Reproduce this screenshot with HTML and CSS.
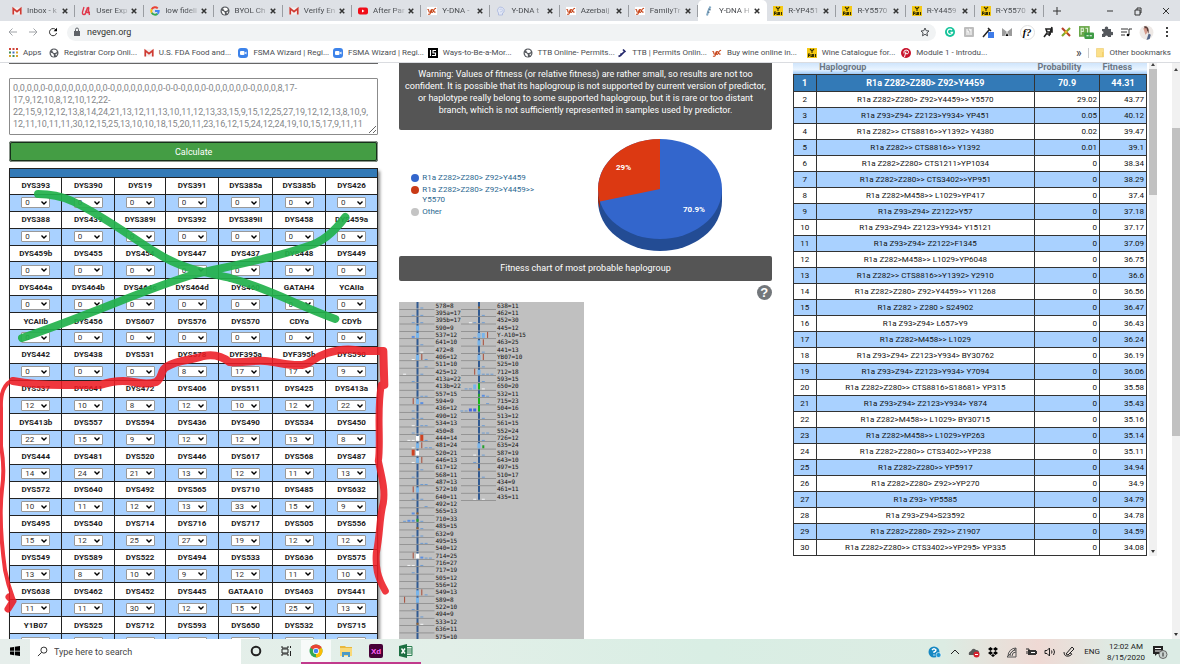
FILE: index.html
```html
<!DOCTYPE html>
<html lang="en">
<head>
<meta charset="utf-8">
<title>Y-DNA Haplogroup Predictor</title>
<link rel="stylesheet" href="styles.css">
</head>
<body>
<svg class="sprite" aria-hidden="true">
  <symbol id="gmail" viewBox="0 0 20 16"><path fill="#f4eeee" d="M1 1h18v14H1z"/><path fill="none" stroke="#cf3a32" stroke-width="3.4" d="M2.500 15V3l7.500 6.500L17.500 3v12"/></symbol>
  <symbol id="ux" viewBox="0 0 20 20"><path fill="none" stroke="#e0364a" stroke-width="2.600" d="M6 2L3 12q-1 5 3 5 3 0 4-5l3-9-2 10M9 12q5-9 6-9t0 6l2 9M11 13h7"/></symbol>
  <symbol id="google" viewBox="0 0 20 20"><g fill="none" stroke-width="3.800"><path stroke="#ea4335" d="M3.500 6.500A7.500 7.500 0 0 1 15.500 4.800"/><path stroke="#fbbc05" d="M3.500 6.500a7.500 7.500 0 0 0 0 7"/><path stroke="#34a853" d="M3.500 13.500a7.500 7.500 0 0 0 11.500 2"/><path stroke="#4285f4" d="M15 15.500q2.500-2 2.500-5.500H10"/></g></symbol>
  <symbol id="globe" viewBox="0 0 20 20"><circle cx="10" cy="10" r="9" fill="#55585d"/><path fill="#fff" d="M9 3l5 1 2 4-4 2-3 0-1-3-3-1zM3 9l5 2 2 3-1 4-4-3zM13 12l4-1-3 5z"/></symbol>
  <symbol id="youtube" viewBox="0 0 20 16"><rect y="1" width="20" height="14" rx="4" fill="#f00d18"/><path fill="#fff" d="M8 5l5 3-5 3z"/></symbol>
  <symbol id="yo" viewBox="0 0 22 18"><path fill="#fff" d="M0 0h22v18H0z"/><path fill="none" stroke="#c8481e" stroke-width="2.400" d="M1 6q3-1 3 3t3 2l3-6M9 11l-3 5H2M20 3q-4 1-5 4t-3 5q-3 0-2-4t4 0q2 5 5 3"/></symbol>
  <symbol id="head" viewBox="0 0 20 20"><path fill="#e2e7f5" stroke="#a5b4dc" stroke-width="1.500" d="M5 18v-4Q1 10 4 5t9-2q5 3 3 9l-3 2v4z"/><path fill="none" stroke="#a5b4dc" d="M7 7q5-3 6 1t-5 4"/></symbol>
  <symbol id="helix" viewBox="0 0 20 20"><path fill="none" stroke="#82a9c4" stroke-width="4" d="M13 1q-5 8-7 18"/><path stroke="#46617c" stroke-width="1.500" d="M9 6l5 2M7 12l4 1"/></symbol>
  <symbol id="yfull" viewBox="0 0 20 20"><path fill="#f5c914" d="M0 0h20v20H0z"/><path fill="none" stroke="#353005" stroke-width="2.200" d="M6 2l4 4 4-4M10 6v4M3 18v-6h3M3 15h3M8 12v5h3v-5M13 12v6M17 12v6"/></symbol>
  <symbol id="zoomcam" viewBox="0 0 20 20"><rect width="20" height="20" rx="6" fill="#3d83ea"/><rect x="4" y="6" width="9" height="8" rx="2" fill="#fff"/><path fill="#fff" d="M13 10l4-3v6z"/></symbol>
  <symbol id="isq" viewBox="0 0 20 20"><path d="M0 0h20v20H0z"/><path fill="none" stroke="#fff" stroke-width="2.200" d="M5 4v12M16 5h-6v5h5v5H8"/></symbol>
  <symbol id="ttb" viewBox="0 0 20 20"><path fill="none" stroke="#24276b" stroke-width="3.500" d="M3 17l4-2 9-9M12 3l5 5M7 11l3 3"/></symbol>
  <symbol id="pin" viewBox="0 0 20 20"><circle cx="10" cy="10" r="10" fill="#c8132c"/><path fill="none" stroke="#fff" stroke-width="2" d="M6 11q-2-6 4-7 6 0 5 5-2 5-5 2M10 7L7 18"/></symbol>
  <symbol id="folder" viewBox="0 0 16 20"><path fill="#fce08a" stroke="#e6c25a" d="M1 1h14v17H1z"/><path fill="#f4d26b" d="M12 8h3v10h-3z"/></symbol>
</svg>

<header class="chrome">
  <div class="tabbar">
    <nav class="tabs" id="tabs" aria-label="Tabs"></nav>
    <div class="tabbar-end">
      <button class="icon-btn" aria-label="New tab"><svg viewBox="0 0 10 10"><path class="ln" d="M5 1v8M1 5h8"/></svg></button>
      <div class="win">
        <button class="icon-btn" aria-label="Minimize"><svg viewBox="0 0 10 10"><path class="ln" d="M2 5h6"/></svg></button>
        <button class="icon-btn" aria-label="Restore"><svg viewBox="0 0 10 10"><path class="ln" d="M2 4h5v5H2zM4 4V2h4v5H7"/></svg></button>
        <button class="icon-btn" aria-label="Close"><svg viewBox="0 0 10 10"><path class="ln" d="M2 2l6 6M8 2L2 8"/></svg></button>
      </div>
    </div>
  </div>
  <div class="toolbar">
    <button class="icon-btn dim" aria-label="Back"><svg viewBox="0 0 10 10"><path class="ln" d="M9 5H1M4.500 1.500L1 5l3.500 3.500"/></svg></button>
    <button class="icon-btn dim" aria-label="Forward"><svg viewBox="0 0 10 10"><path class="ln" d="M1 5h8M5.500 1.500L9 5 5.500 8.500"/></svg></button>
    <button class="icon-btn" aria-label="Reload"><svg viewBox="0 0 10 10"><path class="ln thick" d="M8 3a3.600 3.600 0 1 0 .6 3"/><path d="M9 .8v3.400H5.600z"/></svg></button>
    <div class="omnibox">
      <svg class="lock" viewBox="0 0 8 10"><path fill="#5f6368" d="M1 4h6v5H1z"/><path fill="none" stroke="#5f6368" d="M2.500 4V2.500a1.500 1.500 0 0 1 3 0V4"/></svg>
      <input class="url" aria-label="Address" value="nevgen.org">
      <svg class="star" viewBox="0 0 10 10"><path fill="none" stroke="#4a4d51" d="M5 1l1.200 2.700 2.800.3-2.100 1.900.6 2.900L5 7.300 2.500 8.800l.6-2.900L1 4l2.800-.3z"/></svg>
    </div>
    <div class="exts">
      <svg viewBox="0 0 12 12"><circle cx="6" cy="6" r="5" fill="#15c39a"/><path fill="none" stroke="#fff" stroke-width="1.200" d="M8 4a2.600 2.600 0 1 0 .6 2.300H6.500"/></svg>
      <svg viewBox="0 0 12 12"><rect x="1" y="1" width="10" height="10" rx="1" fill="#bdbdbd"/><path fill="none" stroke="#f4f4f4" stroke-width="1.300" d="M4 9V3M4 6q2-2 2 3M8 3v6M6 3l2 2"/></svg>
      <svg viewBox="0 0 12 12"><path stroke="#222" stroke-width="1.500" d="M1 11l6-7M6 2l3 3"/><path fill="#3e7be8" d="M6 6h6v6H6z"/></svg>
      <svg viewBox="0 0 12 12"><path fill="#9b9b9b" d="M1 2l5 4 5-4v8H1z"/><path stroke="#e0e0e0" d="M4 10l2-4 2 4"/></svg>
      <svg viewBox="0 0 16 16"><circle cx="8" cy="8" r="7.500" fill="#fff" stroke="#ddd"/><text x="3" y="12" class="fq">f?</text></svg>
      <svg viewBox="0 0 12 12"><path fill="none" stroke="#222" stroke-width="1.600" d="M2 11l3-4M4 3h6v3H5zM5 8h4M10 1l-3 9"/></svg>
      <svg viewBox="0 0 12 12"><path stroke="#b8402a" stroke-width="2.200" d="M2 2l8 8"/><path stroke="#80a92b" stroke-width="2.200" d="M10 2l-8 8"/><circle cx="6" cy="6" r="1.500" fill="#e8b125"/></svg>
      <svg viewBox="0 0 14 14"><path fill="#6aa84a" d="M0 1h10v10H0z"/><path fill="none" stroke="#e2f1dc" d="M2 9V3h2v3H2M6 3h2v5H6"/><rect x="5" y="7" width="9" height="6" rx="1" fill="#3e9b45"/><path stroke="#fff" d="M7 10h2M10 10h2"/></svg>
      <svg viewBox="0 0 12 12"><path fill="#55585d" d="M1 3h3a1.700 1.700 0 1 1 3 0h3v3a1.700 1.700 0 1 1 0 3v2H7a1.500 1.500 0 1 0-3 0H1V8a1.500 1.500 0 1 0 0-3z"/></svg>
      <svg viewBox="0 0 12 12"><path class="ln" d="M1 3h7M1 6h6M1 9h4M9 9V3h3"/><circle cx="8" cy="9" r="1.300"/></svg>
      <svg viewBox="0 0 14 14"><circle cx="7" cy="7" r="6.500" fill="#eee9e6"/><path fill="#5a3a34" d="M5 1q5 0 4 7-1-3-4-4z"/><path fill="#d49a8c" d="M4 3h3l1 4-2 2z"/><path fill="#54678a" d="M9 8l2 1-1 4-3 1z"/></svg>
      <svg viewBox="0 0 12 12"><circle cx="6" cy="2" r="1"/><circle cx="6" cy="6" r="1"/><circle cx="6" cy="10" r="1"/></svg>
    </div>
  </div>
  <nav class="bookmarks" aria-label="Bookmarks">
    <a class="apps" href="#"><svg viewBox="0 0 9 9"><path fill="#d04338" d="M0 0h2v2H0zM3.500 0h2v2h-2zM7 0h2v2H7z"/><path fill="#3f8d52" d="M0 3.500h2v2H0zM3.500 7h2v2h-2z"/><path fill="#426fc5" d="M3.500 3.500h2v2h-2z"/><path fill="#d8a52c" d="M7 3.500h2v2H7zM0 7h2v2H0zM7 7h2v2H7z"/></svg>Apps</a>
    <div class="bm-list" id="bookmarks"></div>
    <div class="bm-end"><button class="more" aria-label="More bookmarks">»</button><a href="#"><svg><use href="#folder"/></svg>Other bookmarks</a></div>
  </nav>
</header>

<main class="page">
  <section class="entry">
    <div class="strip"></div>
    <textarea class="haplotype" aria-label="Haplotype" rows="4">0,0,0,0,0-0,0,0,0,0,0,0,0,0-0,0,0,0,0,0,0,0-0-0-0,0,0,0-0,0,0,0,0,0-0,0,0,0,8,17-
17,9,12,10,8,12,10,12,22-
22,15,9,12,12,13,8,14,24,21,13,12,11,13,10,11,12,13,33,15,9,15,12,25,27,19,12,12,13,8,10,9,
12,11,10,11,11,30,12,15,25,13,10,10,18,15,20,11,23,16,12,15,24,12,24,19,10,15,17,9,11,11</textarea>
    <button class="calculate">Calculate</button>
    <table class="markers">
      <colgroup><col class="c-mid"><col class="c-mid"><col class="c-slim"><col class="c-mid"><col class="c-wide"><col class="c-mid"><col class="c-mid"></colgroup>
      <thead><tr><th colspan="7"></th></tr></thead>
      <tbody id="markers"></tbody>
    </table>
    <svg class="ink" viewBox="0 0 390 576" preserveAspectRatio="none" aria-hidden="true">
      <g class="pen-green">
        <path d="M38 131Q56 131 72 138C105 154 125 170 155 189C180 205 202 209 230 215C270 226 294 241 335 256"/>
        <path d="M345 154Q327 178 308 183C275 195 225 204 195 211C145 226 90 252 22 275"/>
      </g>
      <g class="pen-red">
        <path class="fat" d="M13 318Q35 322 62 322T100 322Q118 316 133 319T156 319C163 315 160 307 166 304C179 296 190 298 203 293Q218 290 229 299C246 300 252 297 265 298S288 303 302 302C311 301 312 295 327 290Q345 284 361 288L383 288L384 322"/>
        <path d="M381 322C376 350 381 378 378 398C382 416 385 427 383 440C379 455 380 470 376 490C375 504 377 514 385 528"/>
        <path class="thin" d="M11 318Q0 324 1 345V386"/>
        <path class="thin" d="M1 383Q5 405 2 426C-1 453 2 485 5 507Q8 522 13 535"/>
        <path d="M8 546L13 538 9 534"/>
      </g>
    </svg>
  </section>

  <section class="result">
    <p class="notice">Warning: Values of fitness (or relative fitness) are rather small, so results are not too<br>confident. It is possible that its haplogroup is not supported by current version of predictor,<br>or haplotype really belong to some supported haplogroup, but it is rare or too distant<br>branch, which is not sufficiently represented in samples used by predictor.</p>
    <div class="share">
      <ul class="legend">
        <li class="first">R1a Z282&gt;Z280&gt; Z92&gt;Y4459</li>
        <li class="second">R1a Z282&gt;Z280&gt; Z92&gt;Y4459&gt;&gt;<br>Y5570</li>
        <li class="other">Other</li>
      </ul>
      <svg class="pie" viewBox="0 0 124 112" role="img" aria-label="Probability pie">
        <path fill="#234c94" d="M0 50v12a62 50 0 0 0 124 0V50z"/>
        <path fill="#a5290c" d="M0 50v12l2 8V60z"/>
        <ellipse cx="62" cy="50" rx="62" ry="50" fill="#3366cc"/>
        <path fill="#dc3912" d="M62 50V0A62 50 0 0 0 2 62.500z"/>
        <text x="18" y="31">29%</text><text x="85" y="73">70.9%</text>
      </svg>
    </div>
    <h2 class="chart-title">Fitness chart of most probable haplogroup</h2>
    <button class="help" aria-label="Help">?</button>
    <svg class="fitness" id="fitness" viewBox="0 0 185 340" role="img" aria-label="Fitness chart"></svg>
  </section>

  <section class="ranking">
    <table class="groups">
      <colgroup><col class="g-rank"><col><col class="g-prob"><col class="g-fit"></colgroup>
      <thead><tr><th></th><th>Haplogroup</th><th>Probability</th><th>Fitness</th></tr></thead>
      <tbody id="groups"></tbody>
    </table>
    <div class="bar inner"><i class="up"></i><span class="thumb"></span><i class="down"></i></div>
  </section>
  <div class="bar outer"><i class="up"></i><span class="thumb"></span><i class="down"></i></div>
</main>

<footer class="taskbar">
  <button class="task" aria-label="Start"><svg viewBox="0 0 12 12"><path d="M1 2.500l4-.6v3.800H1zM5.800 1.800L11 1v4.700H5.800zM1 6.400h4v3.800l-4-.6zM5.800 6.400H11v4.700l-5.200-.8z"/></svg></button>
  <label class="search"><svg viewBox="0 0 12 12"><path class="ln" d="M1 11l4-4"/><circle class="ln" cx="7.500" cy="4.500" r="3.300"/></svg><input placeholder="Type here to search" aria-label="Search"></label>
  <button class="task" aria-label="Cortana"><svg viewBox="0 0 12 12"><circle class="ln thick" cx="6" cy="6" r="4.300"/></svg></button>
  <button class="task" aria-label="Task view"><svg viewBox="0 0 12 12"><path class="ln" d="M2 1v2h6V1M2 11V9h6v2M2 4h6v4H2zM10.500 1v2M10.500 6v5"/></svg></button>
  <button class="task open active" aria-label="Chrome"><svg viewBox="0 0 14 14"><circle cx="7" cy="7" r="6.500" fill="#34a853"/><path fill="#ea4335" d="M7 7L1.400 3.700A6.500 6.500 0 0 1 12.600 3.700z"/><path fill="#fbbc05" d="M7 7l5.600-3.300A6.500 6.500 0 0 1 7 13.500z"/><circle cx="7" cy="7" r="3" fill="#fff"/><circle cx="7" cy="7" r="2.300" fill="#4285f4"/></svg></button>
  <button class="task open" aria-label="Explorer"><svg viewBox="0 0 14 14"><path fill="#e9b83d" d="M1 2h5l1 1h6v3H1z"/><path fill="#f9d978" d="M1 4h12v8H1z"/><path fill="#4b9ac7" d="M3 8h8v5H9v-2H5v2H3z"/></svg></button>
  <button class="task open" aria-label="Adobe XD"><svg viewBox="0 0 14 14"><rect width="14" height="14" rx="2" fill="#470137"/><text x="2" y="10" class="xd">Xd</text></svg></button>
  <button class="task open" aria-label="Excel"><svg viewBox="0 0 14 14"><path fill="#eef5ef" stroke="#2d8152" d="M7 2.500h6v9H7z"/><path stroke="#2d8152" d="M8 5h5M8 7h5M8 9h5"/><path fill="#1d6f42" d="M0 2l8-2v14l-8-2z"/><path stroke="#fff" stroke-width="1.400" d="M2.500 4.500l3.500 5M6 4.500l-3.500 5"/></svg></button>
  <div class="tray">
    <svg viewBox="0 0 14 12"><circle cx="6" cy="6" r="5.500" fill="#1688c2"/><path fill="none" stroke="#fff" stroke-width="1.400" d="M4 4q2-2.500 4 0 0 1.500-2 2v1M6 8.500v1"/><circle cx="10.500" cy="9" r="2.500" fill="#1c95d1" stroke="#fff" stroke-width=".6"/></svg>
    <svg viewBox="0 0 12 12"><path class="ln" d="M2 8l4-4 4 4"/></svg>
    <svg viewBox="0 0 12 12"><path fill="#595959" d="M1 9q-1-3 2-4 2-4 5-1 4 0 3 5z"/><circle cx="8.500" cy="8.500" r="3" fill="#d7212e"/><path stroke="#fff" d="M7 8.500h3"/></svg>
    <svg viewBox="0 0 12 12"><path d="M3.500 1L6 3 3.500 5 1 3zM8.500 1L11 3 8.500 5 6 3zM3.500 5L6 7 3.500 9 1 7zM8.500 5L11 7 8.500 9 6 7zM6 8l2 1.500L6 11 4 9.500z"/></svg>
    <svg viewBox="0 0 12 12"><path fill="none" stroke="#555" d="M2 10a8 8 0 0 1 8-8M4 10a6 6 0 0 1 6-6M6 10a4 4 0 0 1 4-4M1 11l9-9v9z"/></svg>
    <svg viewBox="0 0 12 12"><path fill="#333" d="M3 4h8v5H3zM11 5h1v3h-1z"/><path class="ln" d="M1 3h3v2M2 5v3"/><path stroke="#fff" d="M6 6.500h4"/></svg>
    <svg viewBox="0 0 12 12"><path class="ln" d="M1 4.500h2l2.500-2.500v8L3 7.500H1zM7.500 4.500q1 1.500 0 3M9.500 3q2 3 0 6"/></svg>
    <svg viewBox="0 0 12 12"><path class="ln" d="M3 8l6-7 2 2-6 6zM1 6q0 5 5 4 5-2 1-3"/></svg>
    <span class="lang">ENG</span>
    <time class="clock">12:02 AM<br>8/15/2020</time>
    <svg viewBox="0 0 16 14"><path fill="#222" d="M1 1h10v8H5l-2 2V9H1z"/><path stroke="#fff" d="M3 3.500h6M3 6h6"/><circle cx="11" cy="9.500" r="4" fill="#c9d2cf" stroke="#666"/><path stroke="#222" d="M11 7.500v4"/></svg>
  </div>
</footer>
<script src="app.js"></script>
</body>
</html>
```

FILE: styles.css
```css
* { box-sizing: border-box; }
body {
  margin: 0; height: 100vh; display: flex; flex-direction: column; overflow: hidden;
  background: #fff; color: #222; font-family: Roboto, "Liberation Sans", sans-serif; font-size: 8px;
}
button { border: 0; padding: 0; background: none; font: inherit; color: inherit; }
a { color: inherit; text-decoration: none; }
.sprite { position: absolute; width: 0; height: 0; }
.ln { fill: none; stroke: currentColor; stroke-width: 1; }
.thick { stroke-width: 2; }

/* Browser frame */
.chrome { flex: none; color: #4a4d51; border-bottom: 1px solid #dadce0; }
.tabbar { display: flex; height: 21px; background: #dee1e6; }
.tabs { flex: 1; display: flex; padding-left: 6px; min-width: 0; }
.tab { flex: 1; min-width: 0; display: flex; align-items: center; gap: 3px; padding: 0 7px 0 6px; position: relative; }
.tab::after { content: ""; position: absolute; right: 0; top: 5px; height: 12px; border-right: 1px solid #9a9da2; }
.tab svg { flex: none; width: 10px; height: 10px; }
.tab .name { flex: 1; padding-left: 2px; overflow: hidden; white-space: nowrap; mask-image: linear-gradient(90deg, #000 65%, rgba(0,0,0,.2)); }
.tab .x { flex: none; width: 6px; height: 6px; display: flex; color: #333; }
.tab .x svg { width: 6px; height: 6px; }
.tab .x .ln { stroke-width: 2; }
.tab.on { background: #fff; border-radius: 5px 5px 0 0; }
.tab.on::after { display: none; }
.tabbar-end { width: 136px; display: flex; align-items: center; padding: 0 9px 0 8px; justify-content: space-between; }
.win { display: flex; gap: 18px; }
.icon-btn { width: 10px; height: 10px; display: flex; color: #333; }
.icon-btn svg { width: 10px; height: 10px; }
.dim { color: #a0a3a7; }
.toolbar { display: flex; align-items: center; height: 22px; padding: 0 7px 0 8px; gap: 10px; }
.toolbar .thick { stroke-width: 1; }
.omnibox { flex: 1; height: 17px; border-radius: 9px; background: #f1f3f4; display: flex; align-items: center; padding: 0 6px; margin-left: -1px; }
.lock { width: 8px; height: 10px; }
.url { flex: 1; border: 0; background: none; font: 9px Roboto, sans-serif; color: #333; padding: 0 6px; }
.star { width: 10px; height: 10px; }
.exts { display: flex; align-items: center; justify-content: space-between; width: 229px; color: #333; margin-left: -2px; }
.exts svg { width: 12px; height: 12px; }
.exts svg:nth-child(5), .exts svg:nth-child(8), .exts svg:nth-child(11) { width: 15px; height: 15px; }
.fq { font: italic bold 11px "Liberation Serif", serif; }
.bookmarks { display: flex; align-items: center; height: 19px; padding: 0 9px; white-space: nowrap; }
.bookmarks a { display: flex; align-items: center; gap: 5px; }
.bookmarks svg { width: 10px; height: 10px; flex: none; }
.bookmarks .apps { width: 40px; }
.bookmarks .apps svg { width: 9px; height: 9px; }
.bm-list { flex: 1; display: flex; min-width: 0; }
.bm-list a { flex: 1; min-width: 0; }
.bm-end { width: 175px; display: flex; justify-content: flex-end; gap: 6px; align-items: center; }
.bm-end a { border-left: 1px solid #c8cacc; padding-left: 6px; }
.more { font-size: 12px; line-height: 12px; color: #333; }

/* Page */
.page { flex: 1; min-height: 0; display: grid; grid-template-columns: minmax(0, 369fr) minmax(0, 372fr) minmax(0, 364fr) 2px; column-gap: 21px; padding-left: 9px; overflow: hidden; }
.entry { position: relative; min-height: 0; }
.strip { height: 1px; background: #666; margin-bottom: 14px; }
.haplotype { display: block; width: 100%; height: 57px; margin: 0 0 6px; padding: 3px; border: 1px solid #8b8b8b; border-radius: 1px; font: 9px/12px Roboto, sans-serif; color: #85878a; overflow: hidden; white-space: pre; }
.calculate { display: block; width: 100%; height: 21px; margin-bottom: 6px; border: 2px solid #16301a; outline: 1px solid #8a948b; outline-offset: -1px; border-radius: 3px; background: #449d44; color: #fff; font-size: 9px; }
.markers { width: 100%; height: 483px; table-layout: fixed; border-collapse: collapse; box-shadow: 2px 3px 3px #888; }
.markers th, .markers td { border: 1px solid #222; padding: 0; text-align: center; vertical-align: middle; }
.markers thead th { height: 9px; background: #337ab7; }
.markers tbody th { height: 16px; background: #fff; font-size: 8px; line-height: 9px; }
.markers td { height: 16px; background: #a9d1ff; }
.c-mid { width: 52px; } .c-slim { width: 51px; } .c-wide { width: 54px; }
.markers select {
  appearance: none; display: block; margin: 0 auto; width: 29px; height: 11px; padding: 0 0 0 3px; border: 1px solid #999; border-radius: 1px;
  font: 8px/9px Roboto, sans-serif; color: #333;
  background: #fff url("data:image/svg+xml,%3Csvg xmlns='http://www.w3.org/2000/svg' viewBox='0 0 6 4'%3E%3Cpath d='M.5.5 3 3 5.500.5' fill='none' stroke='%23000' stroke-width='1.400'/%3E%3C/svg%3E") no-repeat right 2px center / 6px 4px;
}
.ink { position: absolute; left: -9px; top: 0; width: calc(100% + 21px); height: 576px; pointer-events: none; }
.ink path { fill: none; stroke-linejoin: round; stroke-linecap: round; }
.pen-green { stroke: #22b14c; stroke-width: 8; opacity: .92; }
.pen-red { stroke: #ed1c24; stroke-width: 7; opacity: .88; }
.pen-red .fat { stroke-width: 8; }
.pen-red .thin { stroke-width: 4; }

.result { min-height: 0; display: flex; flex-direction: column; }
.notice { flex: none; margin: 0; height: 67px; padding-top: 5px; background: #555; color: #fff; border-radius: 0 0 2px 2px; text-align: center; font-size: 9px; line-height: 12px; white-space: nowrap; }
.share { flex: none; height: 126px; display: flex; align-items: center; justify-content: space-between; padding: 3px 50px 0 12px; }
.legend { list-style: none; margin: 0; padding: 2px 0 0; color: #2b6790; line-height: 10px; font-size: 8px; }
.legend li { position: relative; padding-left: 11px; margin-bottom: 2px; }
.legend li::before { content: ""; position: absolute; left: 0; top: 1px; width: 8px; height: 8px; border-radius: 50%; background: #3366cc; }
.legend .second::before { background: #c93a16; }
.legend .other::before { background: #c4c4c4; }
.pie { width: 124px; height: 112px; }
.pie text { fill: #fff; font: bold 8px Roboto, sans-serif; }
.chart-title { flex: none; margin: 0; height: 25px; background: #555; color: #fff; border-radius: 2px; text-align: center; font: 9px/25px Roboto, sans-serif; }
.help { flex: none; align-self: flex-end; width: 15px; height: 15px; margin: 4px 0 2px; border-radius: 50%; background: #73777b; color: #fff; font: bold 13px/15px "Liberation Sans", sans-serif; }
.fitness { flex: none; width: 185px; height: 340px; background: #c0c0c0; }
.fitness text { font: 6px "DejaVu Sans Mono", monospace; fill: #111; }

.ranking { display: flex; align-items: flex-start; }
.groups { flex: 1; table-layout: fixed; border-collapse: collapse; }
.groups th { height: 11px; padding: 0 0 2px 3px; font-size: 9px; line-height: 9px; text-align: left; color: #6b7785; background: linear-gradient(#cfe5fc, #e9f4ff 60%, #9cc9f8); }
.groups td { height: 16px; padding: 0 2px; border: 1px solid #333; font-size: 8px; line-height: 9px; text-align: center; color: #111; }
.groups td:nth-child(n+3) { text-align: right; }
.groups tr:nth-child(odd) td { background: #a9d1ff; }
.groups tbody tr:first-child td { height: 17px; background: #337ab7; color: #fff; font-weight: bold; font-size: 9px; text-align: center; }
.g-rank { width: 23px; } .g-prob { width: 65px; } .g-fit { width: 47px; }
.bar { background: #f1f1f1; display: flex; flex-direction: column; align-items: center; }
.bar .thumb { width: 100%; background: #c1c1c1; }
.bar i { border: 2px solid transparent; height: 0; width: 0; }
.bar .up { border-bottom: 3px solid #444; border-top: 0; }
.bar .down { border-top: 3px solid #333; border-bottom: 0; margin: auto 0 3px; }
.inner { width: 8px; margin-left: 2px; align-self: flex-start; height: 493px; }
.inner .up { margin-bottom: 3px; }
.inner .thumb { height: 126px; }
.outer { width: 8px; justify-self: end; }
.outer .up { margin: 5px 0 57px; }
.outer .thumb { height: 308px; }

/* Taskbar */
.taskbar { flex: none; height: 25px; display: flex; align-items: stretch; background: linear-gradient(90deg, #e6eeeb, #e2efe8 38%, #d9eee4 60%, #dcece3 80%, #efd9d4 88%, #dcece5 95%); color: #222; }
.task { width: 30px; display: flex; align-items: center; justify-content: center; border-bottom: 2px solid transparent; border-top: 1px solid transparent; }
.task svg { width: 12px; height: 12px; }
.task .thick { stroke-width: 2; }
.task.open { border-bottom-color: #c13a8c; background-clip: padding-box; }
.task.open svg { width: 14px; height: 14px; }
.task.active { background-color: #f7faf9; }
.xd { font: bold 8px "Liberation Sans", sans-serif; fill: #ff61f6; }
.search { width: 211px; background: #fff; display: flex; align-items: center; gap: 6px; padding-left: 7px; }
.search svg { width: 11px; height: 11px; }
.search input { flex: 1; min-width: 0; border: 0; padding: 0; background: none; font: 9px Roboto, sans-serif; }
.search input::placeholder { color: #444; }
.tray { margin-left: auto; display: flex; align-items: center; gap: 7px; padding-right: 12px; }
.tray svg { width: 12px; height: 12px; }
.tray svg:first-child { width: 14px; }
.tray svg:last-child { width: 16px; height: 14px; }
.clock { text-align: center; font-size: 8px; line-height: 11px; }
.lang { margin-left: 2px; }
```

FILE: app.js
```js
const svgIcon = id => `<svg><use href="#${id}"/></svg>`;

const tabs = [
  ["gmail", "Inbox - k"], ["ux", "User Exp"], ["google", "low fideli"], ["globe", "BYOL Ch"], ["gmail", "Verify En"],
  ["youtube", "After Par"], ["yo", "Y-DNA -"], ["head", "Y-DNA t"], ["yo", "Azerbaij"], ["yo", "FamilyTr"],
  ["helix", "Y-DNA H"], ["yfull", "R-YP451"], ["yfull", "R-Y5570"], ["yfull", "R-Y4459"], ["yfull", "R-Y5570"]
];
document.getElementById("tabs").innerHTML = tabs.map(([icon, name], i) =>
  `<div class="tab${i === 10 ? " on" : ""}">${svgIcon(icon)}<span class="name">${name}</span><button class="x" aria-label="Close tab"><svg viewBox="0 0 8 8"><path class="ln" d="M1 1l6 6M7 1L1 7"/></svg></button></div>`).join("");

const bookmarks = [
  ["globe", "Registrar Corp Onli..."], ["gmail", "U.S. FDA Food and..."], ["zoomcam", "FSMA Wizard | Regi..."], ["zoomcam", "FSMA Wizard | Regi..."],
  ["isq", "Ways-to-Be-a-Mor..."], ["globe", "TTB Online- Permits..."], ["ttb", "TTB | Permits Onlin..."], ["yo", "Buy wine online in..."],
  ["yfull", "Wine Catalogue for..."], ["pin", "Module 1 - Introdu..."]
];
document.getElementById("bookmarks").innerHTML = bookmarks.map(([icon, name]) => `<a href="#">${svgIcon(icon)}${name}</a>`).join("");

const markers = [
  "DYS393:0 DYS390:0 DYS19:0 DYS391:0 DYS385a:0 DYS385b:0 DYS426:0",
  "DYS388:0 DYS439:0 DYS389I:0 DYS392:0 DYS389II:0 DYS458:0 DYS459a:0",
  "DYS459b:0 DYS455:0 DYS454:0 DYS447:0 DYS437:0 DYS448:0 DYS449:0",
  "DYS464a:0 DYS464b:0 DYS464c:0 DYS464d:0 DYS460:0 GATAH4:0 YCAIIa:0",
  "YCAIIb:0 DYS456:0 DYS607:0 DYS576:0 DYS570:0 CDYa:0 CDYb:0",
  "DYS442:0 DYS438:0 DYS531:0 DYS578:8 DYF395a:17 DYF395b:17 DYS590:9",
  "DYS537:12 DYS641:10 DYS472:8 DYS406:12 DYS511:10 DYS425:12 DYS413a:22",
  "DYS413b:22 DYS557:15 DYS594:9 DYS436:12 DYS490:12 DYS534:13 DYS450:8",
  "DYS444:14 DYS481:24 DYS520:21 DYS446:13 DYS617:12 DYS568:11 DYS487:13",
  "DYS572:10 DYS640:11 DYS492:12 DYS565:13 DYS710:33 DYS485:15 DYS632:9",
  "DYS495:15 DYS540:12 DYS714:25 DYS716:27 DYS717:19 DYS505:12 DYS556:12",
  "DYS549:13 DYS589:8 DYS522:10 DYS494:9 DYS533:12 DYS636:11 DYS575:10",
  "DYS638:11 DYS462:11 DYS452:30 DYS445:12 GATAA10:15 DYS463:25 DYS441:13",
  "Y1B07:10 DYS525:10 DYS712:18 DYS593:15 DYS650:20 DYS532:11 DYS715:23"
].map(row => row.split(" ").map(m => m.split(":")));
document.getElementById("markers").innerHTML = markers.map(row =>
  `<tr>${row.map(([n]) => `<th><label for="${n}">${n}</label></th>`).join("")}</tr>` +
  `<tr>${row.map(([n, v]) => `<td><select id="${n}"><option>${v}</option></select></td>`).join("")}</tr>`).join("");

const groups = `R1a Z282>Z280> Z92>Y4459|70.9|44.31
R1a Z282>Z280> Z92>Y4459>> Y5570|29.02|43.77
R1a Z93>Z94> Z2123>Y934> YP451|0.05|40.12
R1a Z282>> CTS8816>>Y1392> Y4380|0.02|39.47
R1a Z282>> CTS8816>> Y1392|0.01|39.1
R1a Z282>Z280> CTS1211>YP1034|0|38.34
R1a Z282>Z280>> CTS3402>>YP951|0|38.29
R1a Z282>M458>> L1029>YP417|0|37.4
R1a Z93>Z94> Z2122>Y57|0|37.18
R1a Z93>Z94> Z2123>Y934> Y15121|0|37.17
R1a Z93>Z94> Z2122>F1345|0|37.09
R1a Z282>M458>> L1029>YP6048|0|36.75
R1a Z282>> CTS8816>>Y1392> Y2910|0|36.6
R1a Z282>Z280> Z92>Y4459>> Y11268|0|36.56
R1a Z282 > Z280 > S24902|0|36.47
R1a Z93>Z94> L657>Y9|0|36.43
R1a Z282>M458>> L1029|0|36.24
R1a Z93>Z94> Z2123>Y934> BY30762|0|36.19
R1a Z93>Z94> Z2123>Y934> Y7094|0|36.06
R1a Z282>Z280>> CTS8816>S18681> YP315|0|35.58
R1a Z93>Z94> Z2123>Y934> Y874|0|35.43
R1a Z282>M458>> L1029> BY30715|0|35.16
R1a Z282>M458>> L1029>YP263|0|35.14
R1a Z282>Z280>> CTS3402>>YP238|0|35.11
R1a Z282>Z280>> YP5917|0|34.94
R1a Z282>Z280> Z92>>YP270|0|34.9
R1a Z93> YP5585|0|34.79
R1a Z93>Z94>S23592|0|34.78
R1a Z282>Z280> Z92>> Z1907|0|34.59
R1a Z282>Z280>> CTS3402>>YP295> YP335|0|34.08`.split("\n").map(r => r.split("|"));
document.getElementById("groups").innerHTML = groups.map(([g, p, f], i) =>
  `<tr><td>${i + 1}</td><td>${g.replace(/>/g, "&gt;")}</td><td>${p}</td><td>${f}</td></tr>`).join("");

// Each entry: marker=value, then marks as slot offset + kind.
const left = `578=8 1b|395a=17 -1b 1b|395b=17 -1b 1b|590=9 0L|537=12 -1m 0L|641=10 1b|472=8 1w|406=12 -1w 0L 1r 2b|511=10 2b|425=12 -3w 1b|413a=22 -1b|413b=22|557=15 1b 2b|594=9 -1r 0L 1m|436=12 -1b|490=12 -1b 1b|534=13 -1w 1b 2b|450=8 -1b 1b|444=14 -2w -1w 0W 1R 2b|481=24 -1w 0L 1r 2b 3b|520=21 -1R 0W|446=13 -1w 0L 1r|617=12 1b|568=11 -1b|487=13 1b 2b|572=10 -1r 0L|640=11 -1b 1b|492=12 2b|565=13 -1m 0o|710=33 -3b -2m -1m 0g 1b|485=15 1b 0o|632=9 -1b 1b|495=15 1b 2b|540=12|714=25 -1r 0W 1m 2b 3b|716=27 -2w -1w 1b|717=19 -1b|505=12|556=12|549=13 0L 1r 2b|589=8 -3r 0L|522=10 -1b|494=9 1b|533=12 0o 1w|636=11|575=10`;
const right = `638=11 0o|462=11 1b|452=30 -2w -1b 1b|445=12|Y-A10=15 -1b 0L 1L 2r|463=25 0L 1r|441=13 1b|YB07=10 0L 1r|525=10 1b|712=18 -1r 0L 1b 2b 3b|593=15 1b|650=20 -3b -2b -1L 0G 1w|532=11 0g 1m 2b|715=23 0G 2b|504=16 -4b -3b -2B -1B 0G|513=12 1b|561=15 1b|552=24 1b 2b|726=12 1b|635=24 0L 1g|587=19 -1w 1b|643=10 -1b|497=15 0o|510=17 1b|434=9|461=11|435=11 -1w 1w`;
const kinds = {
  b: [3, 1, "#6c9bd2"], w: [3, 1, "#f4f6f8"], m: [3, 2, "#5c8fe0"], B: [3, 3, "#4669dc"], L: [3, 5, "#78b4ea"],
  W: [3, 5, "#fff"], r: [1, 6, "#a94a35"], R: [3, 6, "#cf4222"], g: [2, 3, "#24a02c"], G: [2, 6, "#16b516"], o: [2, 2, "#94602c"]
};
const pitch = 331 / 45;
const draw = (data, x0) => data.split("|").map((entry, i) => {
  const [label, ...marks] = entry.split(" ");
  const top = i * pitch, mid = x0 + 18;
  return `<rect x="${x0}" y="${top + 7}" width="35" height="0.6" fill="#777"/>` +
    `<rect x="${mid - 1}" y="${top}" width="2" height="6.500" fill="#315a91"/>` +
    marks.map(m => {
      const [w, h, color] = kinds[m.slice(-1)];
      return `<rect x="${mid + parseInt(m) * 4.3 - w / 2}" y="${top + 6.5 - h}" width="${w}" height="${h}" fill="${color}"/>`;
    }).join("") +
    `<text x="${x0 + 36}" y="${top + 5.5}">${label}</text>`;
}).join("");
document.getElementById("fitness").innerHTML = draw(left, 0.5) + draw(right, 62);
```
